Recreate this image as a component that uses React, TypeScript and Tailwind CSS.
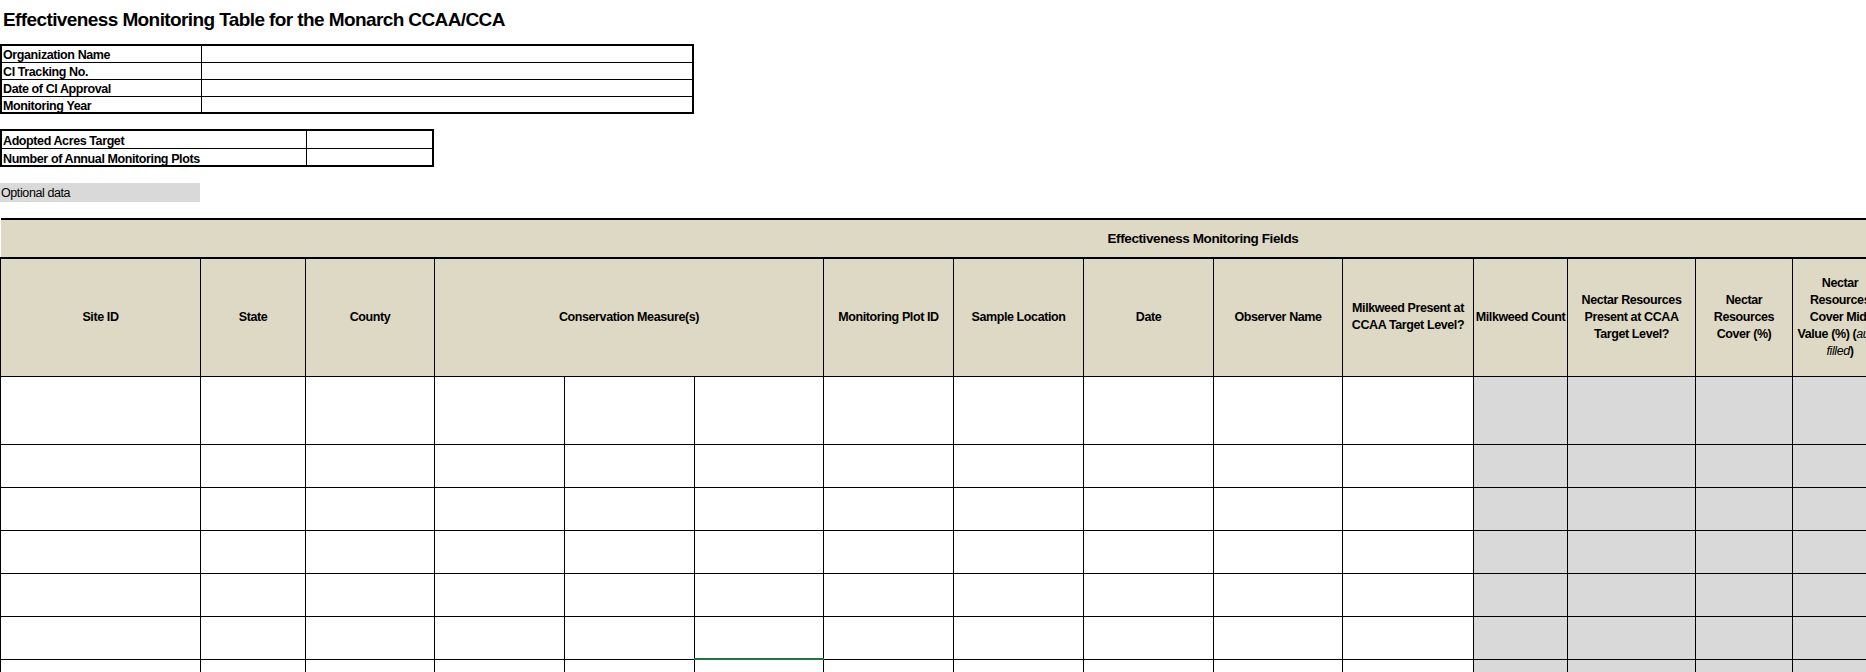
import React from "react";

const F = { fontFamily: '"Liberation Sans Narrow","Liberation Sans",Arial,sans-serif' };
const widths = [200, 105, 129, 130, 130, 129, 130, 130, 130, 129, 131, 94, 128, 97, 95];
const rowH = [68, 43, 43, 43, 43, 43, 43];

export default function App() {
  return (
    <div className="w-[1866px] h-[672px] overflow-hidden bg-white text-black" style={F}>
      <div className="pl-[3px] pt-[6px] text-[19px] font-bold h-[44px] tracking-[-0.6px]">Effectiveness Monitoring Table for the Monarch CCAA/CCA</div>
      <table className="border-collapse border-2 border-black w-[694px] text-[12.5px] font-bold leading-none tracking-[-0.4px]">
        <tbody>
          {["Organization Name", "CI Tracking No.", "Date of CI Approval", "Monitoring Year"].map((t) => (
            <tr key={t} className="h-[17px]">
              <td className="border border-black w-[200px] pl-[1px] align-bottom">{t}</td>
              <td className="border border-black"></td>
            </tr>
          ))}
        </tbody>
      </table>
      <table className="mt-[15px] border-collapse border-2 border-black w-[434px] text-[12.5px] font-bold leading-none tracking-[-0.4px]">
        <tbody>
          {["Adopted Acres Target", "Number of Annual Monitoring Plots"].map((t) => (
            <tr key={t} className="h-[18px]">
              <td className="border border-black w-[305px] pl-[1px] align-bottom">{t}</td>
              <td className="border border-black"></td>
            </tr>
          ))}
        </tbody>
      </table>
      <div className="mt-[16px] w-[200px] h-[19px] bg-[#d9d9d9] text-[12.5px] pl-[1px] leading-[20px] tracking-[-0.4px]">Optional data</div>
      <table className="mt-[16px] border-collapse table-fixed text-[12.5px] font-bold leading-[17px] tracking-[-0.4px]" style={{ width: widths.reduce((a, b) => a + b, 0) }}>
        <colgroup>
          {widths.map((w, i) => <col key={i} style={{ width: w }} />)}
        </colgroup>
        <tbody>
          <tr className="h-[39px] bg-[#ddd9c4] border-t-2 border-b-2 border-black">
            <td colSpan={15} className="pl-[1107px] align-middle whitespace-nowrap text-[13.5px]">Effectiveness Monitoring Fields</td>
          </tr>
          <tr className="h-[118px] bg-[#ddd9c4] text-center">
            <td className="border border-black">Site ID</td>
            <td className="border border-black">State</td>
            <td className="border border-black">County</td>
            <td colSpan={3} className="border border-black">Conservation Measure(s)</td>
            <td className="border border-black">Monitoring Plot ID</td>
            <td className="border border-black">Sample Location</td>
            <td className="border border-black">Date</td>
            <td className="border border-black">Observer Name</td>
            <td className="border border-black px-1">Milkweed Present at CCAA Target Level?</td>
            <td className="border border-black">Milkweed Count</td>
            <td className="border border-black px-2">Nectar Resources Present at CCAA Target Level?</td>
            <td className="border border-black">Nectar Resources Cover (%)</td>
            <td className="border border-black">Nectar Resources Cover Mid- Value (%) (<i className="font-normal">auto-filled</i>)</td>
          </tr>
          {rowH.map((h, r) => (
            <tr key={r} style={{ height: h }}>
              {widths.map((_, c) => (
                <td
                  key={c}
                  className={`border border-black ${c >= 11 ? "bg-[#d9d9d9]" : ""} ${r === 6 && c === 5 ? "border-t-2 border-t-[#217346]" : ""}`}
                ></td>
              ))}
            </tr>
          ))}
        </tbody>
      </table>
    </div>
  );
}
